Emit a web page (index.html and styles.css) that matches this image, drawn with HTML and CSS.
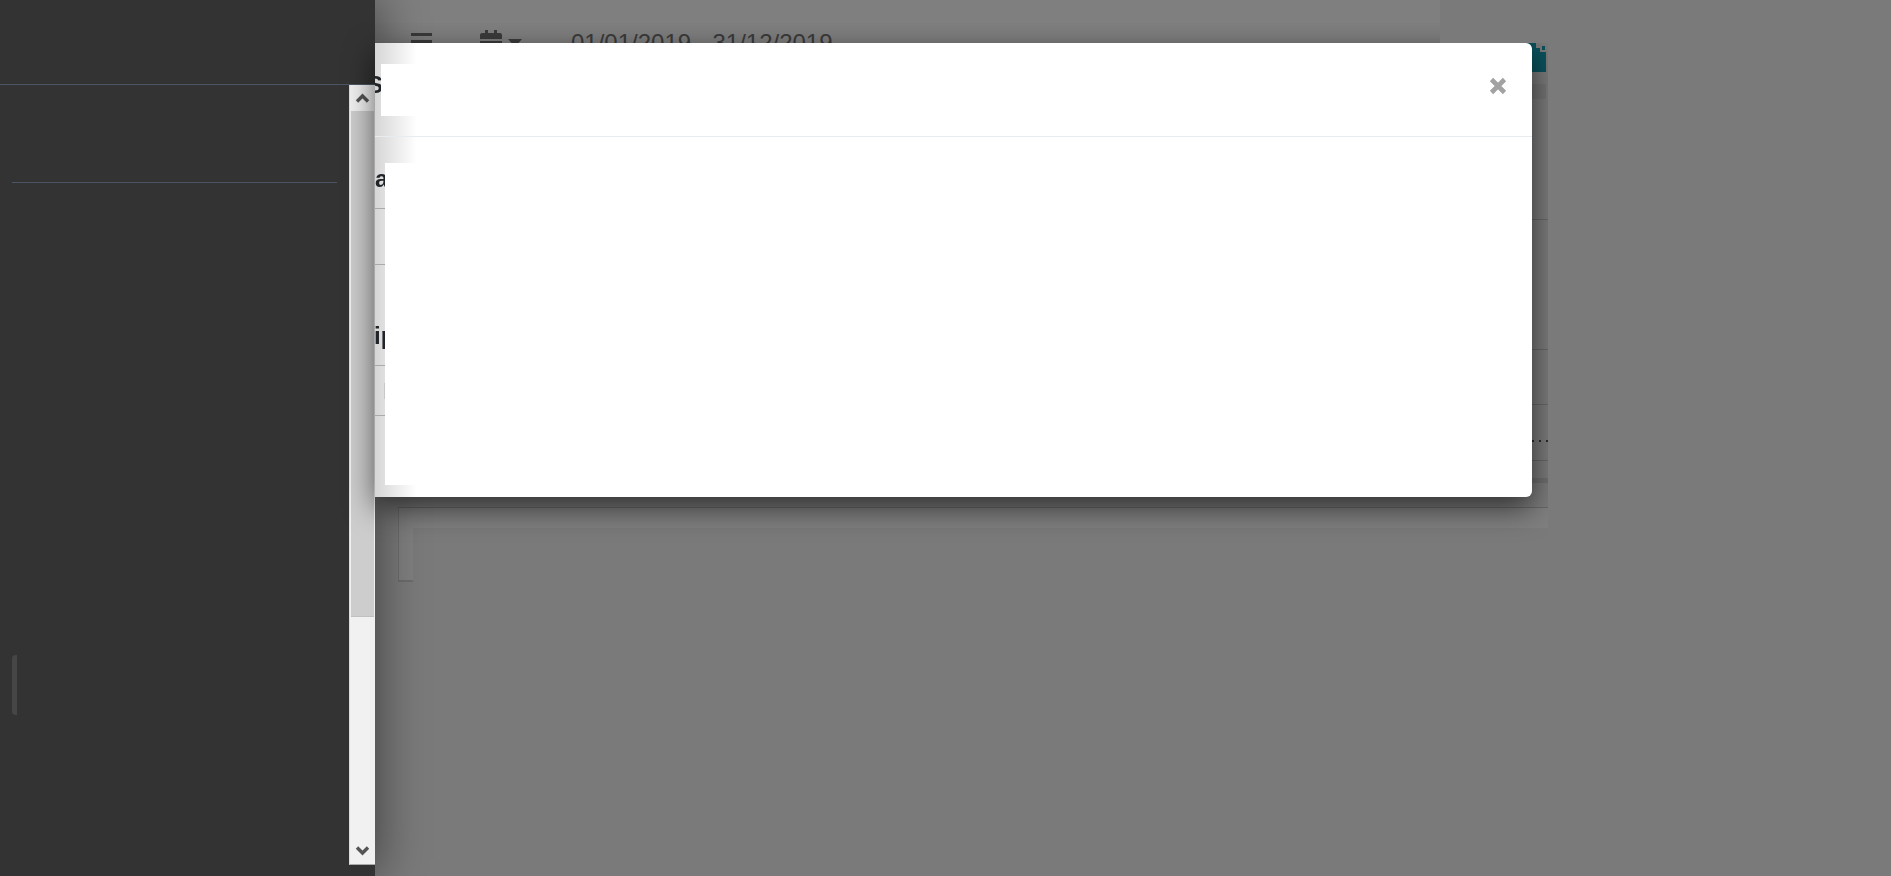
FILE: index.html
```html
<!DOCTYPE html>
<html lang="en">
<head>
<meta charset="utf-8">
<title>Dashboard</title>
<link rel="stylesheet" href="styles.css">
</head>
<body>
<div class="shell">
  <aside class="sidebar">
    <div class="side-head"></div>
    <div class="side-body">
      <nav class="side-nav">
        <div class="side-block"></div>
        <div class="side-handle"></div>
      </nav>
      <div class="scrollbar">
        <div class="sb-btn">
          <svg width="15" height="10" viewBox="0 0 15 10"><path d="M2 8.5 L7.5 3 L13 8.5" fill="none" stroke="#555" stroke-width="3.4"/></svg>
        </div>
        <div class="sb-track"><div class="sb-thumb"></div></div>
        <div class="sb-btn">
          <svg width="15" height="10" viewBox="0 0 15 10"><path d="M2 1.5 L7.5 7 L13 1.5" fill="none" stroke="#555" stroke-width="3.4"/></svg>
        </div>
      </div>
    </div>
  </aside>

  <main class="main">
    <header class="topbar">
      <div class="topbar-left">
        <svg class="ic-menu" width="21" height="24" viewBox="0 0 21 24"><path d="M0 3h21v3H0zM0 10h21v3H0zM0 17h21v3H0z" fill="#777"/></svg>
        <svg class="ic-cal" width="22" height="24" viewBox="0 0 22 24"><path d="M5 0h3v3h6V0h3v3h3a2 2 0 0 1 2 2v4H0V5a2 2 0 0 1 2-2h3zM0 11h22v11a2 2 0 0 1-2 2H2a2 2 0 0 1-2-2z" fill="#777"/></svg>
        <svg class="ic-caret" width="14" height="8" viewBox="0 0 14 8"><path d="M0 0h14L7 8z" fill="#777"/></svg>
        <span class="date-range">01/01/2019 - 31/12/2019</span>
      </div>
      <div class="topbar-right">
        <div class="teal-btn">
          <svg width="46" height="29" viewBox="0 0 46 29"><path d="M0 0h36v5h4v4h6v20H0z" fill="#17a2b8"/><path d="M42 3h3v4h-3z" fill="#17a2b8"/></svg>
        </div>
      </div>
    </header>
    <div class="filter-strip"></div>
    <section class="panel">
      <div class="row r1"></div>
      <div class="row r2"></div>
      <div class="row-dotted"></div>
      <div class="row r3"></div>
      <div class="row-strip"></div>
      <div class="row r4"></div>
      <div class="panel-foot">
        <div class="foot-side"></div>
        <div class="foot-main"></div>
      </div>
    </section>
  </main>
</div>

<div class="backdrop"></div>

<div class="modal" role="dialog">
  <div class="modal-head">
    <div class="head-leak"><span>S</span></div>
    <div class="head-white">
      <svg class="close" width="18" height="18" viewBox="0 0 18 18"><path d="M2.5 2.5 L15.5 15.5 M15.5 2.5 L2.5 15.5" stroke="#a2a2a2" stroke-width="4.6" fill="none"/></svg>
    </div>
  </div>
  <div class="modal-body">
    <div class="body-leak">
      <div class="leak-row lr1"><b>a</b></div>
      <div class="leak-row lr2"></div>
      <div class="leak-row lr3"><b>ip</b></div>
      <div class="leak-row lr4"><i class="leak-mark"></i></div>
    </div>
    <div class="body-white"></div>
  </div>
</div>
</body>
</html>
```
FILE: styles.css
```css
* { box-sizing: border-box; }
html, body {
  margin: 0;
  height: 876px;
  overflow: hidden;
  background: #f4f4f4;
  font-family: "Liberation Sans", Arial, sans-serif;
  color: #212529;
}
.shell {
  display: flex;
  height: 876px;
}

/* sidebar */
.sidebar {
  position: relative;
  z-index: 5;
  width: 375px;
  flex: none;
  background: #333;
  box-shadow: 4px 0 45px rgba(0, 0, 0, .45);
}
.side-head {
  height: 85px;
  border-bottom: 1px solid #4b5563;
}
.side-body {
  display: flex;
  height: 780px;
}
.side-nav {
  flex: 1;
  padding: 0 12px;
}
.side-block {
  height: 98px;
  border-bottom: 1px solid #4b5563;
}
.side-handle {
  width: 5px;
  height: 60px;
  margin-top: 472px;
  background: #464646;
  border-radius: 4px 0 0 4px;
}
.scrollbar {
  width: 26px;
  flex: none;
  display: flex;
  flex-direction: column;
  background: #f1f1f1;
  border-left: 1px solid #ddd;
  border-bottom: 1px solid #aaa;
}
.sb-btn {
  height: 26px;
  flex: none;
  display: flex;
  align-items: center;
  justify-content: center;
  padding-right: 1px;
}
.sb-track {
  flex: 1;
  padding: 0 1px;
}
.sb-thumb {
  height: 506px;
  background: #cdcdcd;
  border-bottom: 1px solid #c0c0c0;
}

/* page under the backdrop */
.main {
  flex: 1;
  min-width: 0;
}
.topbar {
  display: flex;
  height: 84px;
}
.topbar-left {
  width: 1065px;
  height: 84px;
  flex: none;
  background: #fff;
  display: flex;
  align-items: flex-start;
  padding: 28px 0 0 36px;
}
.ic-menu { margin-top: 2px; }
.ic-cal { margin: 2px 0 0 48px; }
.ic-caret { margin: 11px 0 0 6px; }
.date-range {
  margin-left: 49px;
  font-size: 24px;
  line-height: 28px;
  margin-top: 1px;
  color: #777;
  white-space: nowrap;
}
.topbar-right {
  flex: 1;
  padding: 43px 0 0 60px;
}
.teal-btn {
  width: 46px;
  height: 29px;
}
.teal-btn svg { display: block; }
.filter-strip {
  width: 1144px;
  height: 15px;
  margin-left: 27px;
  background: #e6e6e6;
}
.panel {
  width: 1150px;
  margin: 120px 0 0 23px;
  border-top: 1px solid #ccc;
}
.row {
  border-bottom: 1px solid #ccc;
}
.r1 { height: 130px; }
.r2 { height: 55px; }
.row-dotted {
  height: 2px;
  margin-top: 35px;
  background: repeating-linear-gradient(90deg, #555 0 2px, transparent 2px 7px);
}
.r3 { height: 19px; }
.row-strip {
  height: 5px;
  margin-top: 17px;
  background: #dcdcdc;
}
.r4 { height: 25px; }
.panel-foot {
  display: flex;
  align-items: flex-start;
}
.foot-side {
  width: 15px;
  height: 74px;
  background: #fff;
  border-left: 1px solid #d8d8d8;
  border-bottom: 2px solid #d8d8d8;
}
.foot-main {
  flex: 1;
  height: 20px;
  background: #fff;
}

/* backdrop */
.backdrop {
  position: fixed;
  inset: 0;
  z-index: 2;
  background: rgba(0, 0, 0, .5);
}

/* modal */
.modal {
  position: absolute;
  left: 375px;
  top: 43px;
  z-index: 10;
  width: 1157px;
  height: 454px;
  display: flex;
  flex-direction: column;
  border-radius: 0 6px 6px 0;
  background: linear-gradient(90deg, #d6d6d6, #fff 42px);
  box-shadow: 0 10px 30px rgba(0, 0, 0, .62);
  clip-path: polygon(-40px -20px, 1065px -20px, 1065px 0, 1173px 0, 1173px 500px, -40px 500px);
}
.modal-head {
  height: 94px;
  flex: none;
  display: flex;
  padding-top: 21px;
  padding-bottom: 20px;
  border-bottom: 1px solid #e9ecef;
}
.head-leak {
  width: 6px;
  flex: none;
  overflow: hidden;
  font-size: 24px;
  font-weight: 700;
  line-height: 28px;
  padding-top: 7px;
}
.head-leak span {
  display: block;
  margin-left: -8px;
}
.head-white {
  flex: 1;
  background: #fff;
  display: flex;
  justify-content: flex-end;
  border-radius: 0 6px 0 0;
}
.close {
  margin: 13px 25px 0 0;
}
.modal-body {
  flex: 1;
  display: flex;
  padding: 26px 0 12px;
}
.body-leak {
  width: 10px;
  flex: none;
  overflow: hidden;
  font-size: 24px;
  line-height: 29px;
  white-space: nowrap;
}
.body-leak b { display: block; }
.leak-row { border-bottom: 1px solid #aaa; }
.lr1 { height: 46px; padding-top: 1px; }
.lr2 { height: 56px; }
.lr3 { height: 101px; padding-top: 56px; }
.lr3 b { margin-left: -1px; }
.lr4 {
  height: 50px;
  padding-top: 17px;
  display: flex;
  justify-content: flex-end;
}
.leak-mark {
  width: 1px;
  height: 16px;
  background: #c8c8c8;
}
.body-white {
  flex: 1;
  background: #fff;
}
```
